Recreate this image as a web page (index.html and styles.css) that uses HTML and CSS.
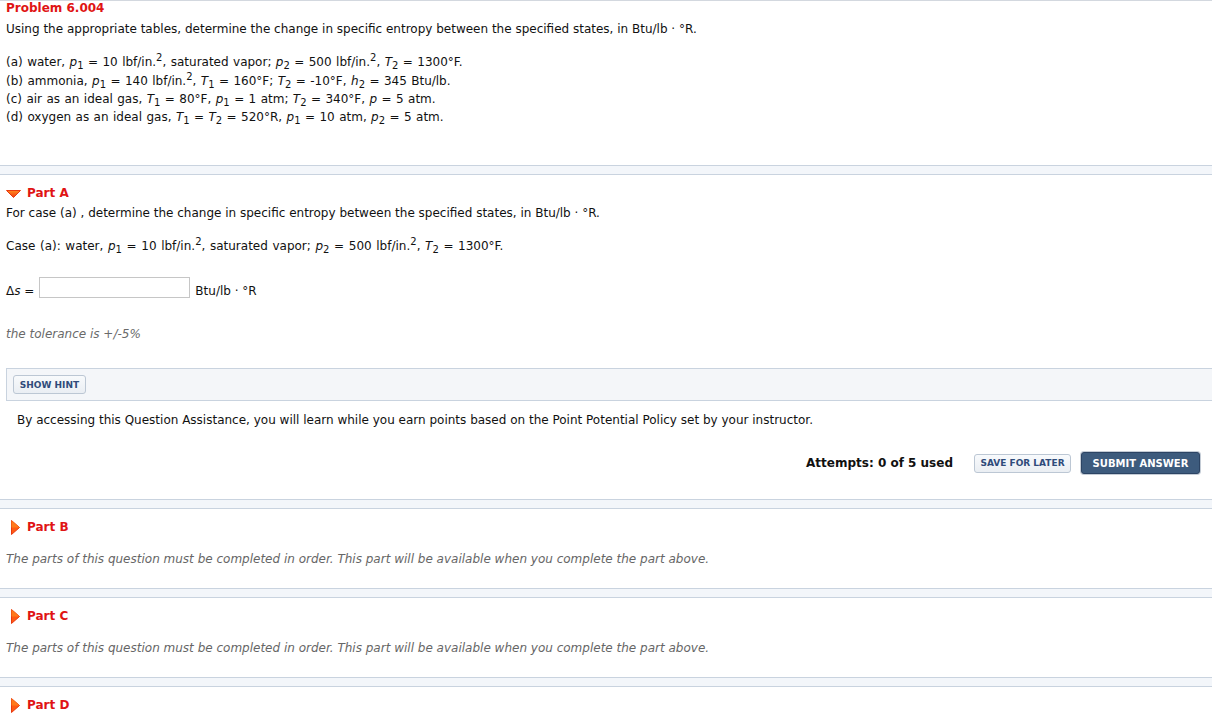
FILE: index.html
```html
<!DOCTYPE html>
<html lang="en">
<head>
<meta charset="utf-8">
<title>Problem 6.004</title>
<link rel="stylesheet" href="styles.css">
</head>
<body>
<div class="page">
  <div class="problem">
    <h1 class="title">Problem 6.004</h1>
    <p class="intro">Using the appropriate tables, determine the change in specific entropy between the specified states, in Btu/lb · °R.</p>
    <div class="cases">
      <div class="case case-a">(a) water, <i>p</i><sub>1</sub> = 10 lbf/in.<sup>2</sup>, saturated vapor; <i>p</i><sub>2</sub> = 500 lbf/in.<sup>2</sup>, <i>T</i><sub>2</sub> = 1300°F.</div>
      <div class="case">(b) ammonia, <i>p</i><sub>1</sub> = 140 lbf/in.<sup>2</sup>, <i>T</i><sub>1</sub> = 160°F; <i>T</i><sub>2</sub> = -10°F, <i>h</i><sub>2</sub> = 345 Btu/lb.</div>
      <div class="case">(c) air as an ideal gas, <i>T</i><sub>1</sub> = 80°F, <i>p</i><sub>1</sub> = 1 atm; <i>T</i><sub>2</sub> = 340°F, <i>p</i> = 5 atm.</div>
      <div class="case">(d) oxygen as an ideal gas, <i>T</i><sub>1</sub> = <i>T</i><sub>2</sub> = 520°R, <i>p</i><sub>1</sub> = 10 atm, <i>p</i><sub>2</sub> = 5 atm.</div>
    </div>
  </div>

  <div class="band band-a"></div>

  <section class="part part-open">
    <div class="part-head">
      <svg class="tri-down" width="15" height="8" viewBox="0 0 15 8" aria-hidden="true">
        <defs>
          <linearGradient id="gd" x1="0" y1="0" x2="0" y2="1">
            <stop offset="0" stop-color="#ff8a1e"/>
            <stop offset="1" stop-color="#f03a10"/>
          </linearGradient>
        </defs>
        <polygon points="0.5,0.5 14.5,0.5 7.5,7.5" fill="url(#gd)" stroke="#e8380f" stroke-width="1" stroke-linejoin="round"/>
      </svg>
      <span class="part-name">Part A</span>
    </div>
    <p class="prompt">For case (a) , determine the change in specific entropy between the specified states, in Btu/lb · °R.</p>
    <p class="case-line">Case (a): water, <i>p</i><sub>1</sub> = 10 lbf/in.<sup>2</sup>, saturated vapor; <i>p</i><sub>2</sub> = 500 lbf/in.<sup>2</sup>, <i>T</i><sub>2</sub> = 1300°F.</p>
    <div class="answer-row">
      <span class="answer-label">Δ<i>s</i> =</span>
      <input class="answer-input" type="text" aria-label="answer">
      <span class="answer-unit">Btu/lb · °R</span>
    </div>
    <p class="tolerance">the tolerance is +/-5%</p>
    <div class="hint-box">
      <button class="btn btn-light btn-hint" type="button">SHOW HINT</button>
    </div>
    <p class="assist">By accessing this Question Assistance, you will learn while you earn points based on the Point Potential Policy set by your instructor.</p>
    <div class="submit-row">
      <span class="attempts">Attempts: 0 of 5 used</span>
      <button class="btn btn-light btn-save" type="button">SAVE FOR LATER</button>
      <button class="btn btn-primary" type="button">SUBMIT ANSWER</button>
    </div>
  </section>

  <div class="band band-b"></div>
  <section class="part part-closed">
    <div class="part-head">
      <svg class="tri-right" width="9" height="15" viewBox="0 0 9 15" aria-hidden="true">
        <polygon points="0.5,0.5 8.5,7.5 0.5,14.5" fill="#ff5a14" stroke="#e8380f" stroke-width="1" stroke-linejoin="round"/>
        <polygon points="0.5,0.5 8.5,7.5 0.5,7.5" fill="#ff7a1c"/>
      </svg>
      <span class="part-name">Part B</span>
    </div>
    <p class="locked">The parts of this question must be completed in order. This part will be available when you complete the part above.</p>
  </section>

  <div class="band"></div>
  <section class="part part-closed">
    <div class="part-head">
      <svg class="tri-right" width="9" height="15" viewBox="0 0 9 15" aria-hidden="true">
        <polygon points="0.5,0.5 8.5,7.5 0.5,14.5" fill="#ff5a14" stroke="#e8380f" stroke-width="1" stroke-linejoin="round"/>
        <polygon points="0.5,0.5 8.5,7.5 0.5,7.5" fill="#ff7a1c"/>
      </svg>
      <span class="part-name">Part C</span>
    </div>
    <p class="locked">The parts of this question must be completed in order. This part will be available when you complete the part above.</p>
  </section>

  <div class="band"></div>
  <section class="part part-closed">
    <div class="part-head">
      <svg class="tri-right" width="9" height="15" viewBox="0 0 9 15" aria-hidden="true">
        <polygon points="0.5,0.5 8.5,7.5 0.5,14.5" fill="#ff5a14" stroke="#e8380f" stroke-width="1" stroke-linejoin="round"/>
        <polygon points="0.5,0.5 8.5,7.5 0.5,7.5" fill="#ff7a1c"/>
      </svg>
      <span class="part-name">Part D</span>
    </div>
  </section>
</div>
</body>
</html>
```

FILE: styles.css
```css
html, body {
  margin: 0;
  padding: 0;
  background: #ffffff;
}

body {
  font-family: "DejaVu Sans", Verdana, sans-serif;
  font-size: 12px;
  color: #111111;
  overflow-x: hidden;
}

.page {
  border-top: 1px solid #d3d8df;
}

p {
  margin: 0;
}

sub, sup {
  font-size: 10px;
  line-height: 0;
}

sub {
  vertical-align: -3px;
}

sup {
  vertical-align: 5px;
}

.problem {
  padding: 2px 6px 0 6px;
}

.title {
  margin: 0;
  font-size: 12px;
  line-height: 11px;
  font-weight: bold;
  color: #e01414;
}

.intro {
  margin-top: 6px;
  line-height: 18px;
}

.cases {
  margin-top: 15px;
}

.case {
  line-height: 18px;
  word-spacing: 0.6px;
}

.case-a {
  margin-bottom: 1px;
}

.band {
  height: 8px;
  border-top: 1px solid #c9d3df;
  border-bottom: 1px solid #c9d3df;
  background: #f3f6fa;
}

.band-a {
  margin-top: 39px;
}

.band-b {
  margin-top: 25px;
}

.part {
  padding: 0 6px;
}

.part-head {
  display: flex;
  align-items: center;
  gap: 6px;
  height: 18px;
  margin-top: 9px;
}

.part-closed .part-head {
  gap: 7px;
  padding-left: 5px;
}

.part-name {
  font-weight: bold;
  color: #e01414;
  line-height: 18px;
}

.tri-down {
  display: block;
  margin-top: 1px;
}

.tri-right {
  display: block;
}

.prompt {
  margin-top: 2px;
  line-height: 18px;
}

.case-line {
  margin-top: 15px;
  line-height: 18px;
  word-spacing: 0.8px;
}

.answer-row {
  display: flex;
  align-items: flex-start;
  margin-top: 22px;
}

.answer-label,
.answer-unit {
  line-height: 18px;
  margin-top: 5px;
}

.answer-input {
  box-sizing: border-box;
  width: 151px;
  height: 21px;
  margin: 0 5px 0 5px;
  padding: 0 3px;
  border: 1px solid #c6c6c6;
  background: #ffffff;
  font: inherit;
}

.tolerance {
  margin-top: 25px;
  line-height: 18px;
  font-style: italic;
  color: #6a6a6a;
}

.hint-box {
  margin-top: 25px;
  margin-right: -6px;
  padding: 6px 6px 6px 6px;
  border: 1px solid #c9d3df;
  border-right: none;
  background: #f4f6f9;
}

.btn {
  box-sizing: border-box;
  display: inline-flex;
  align-items: center;
  justify-content: center;
  font-family: "DejaVu Sans", Verdana, sans-serif;
  font-weight: bold;
  border-radius: 3px;
  padding: 0;
  cursor: pointer;
}

.btn-light {
  background: linear-gradient(#f8fafc, #eaeef3);
  border: 1px solid #bcc7d4;
  color: #2f4b7a;
  font-size: 9px;
  height: 19px;
}

.btn-hint {
  width: 73px;
  display: flex;
}

.assist {
  margin-top: 10px;
  padding-left: 11px;
  line-height: 18px;
}

.submit-row {
  display: flex;
  justify-content: flex-end;
  align-items: center;
  height: 22px;
  margin-top: 23px;
  padding-right: 6px;
}

.attempts {
  font-weight: bold;
  line-height: 18px;
  margin-right: 21px;
}

.btn-save {
  width: 97px;
  margin-right: 10px;
}

.btn-primary {
  width: 119px;
  height: 22px;
  background: #3d5b7d;
  border: 1px solid #2c4464;
  box-shadow: 0 0 0 1px #c4ccd6;
  color: #ffffff;
  font-size: 10px;
}

.locked {
  margin-top: 14px;
  margin-bottom: 20px;
  line-height: 18px;
  font-style: italic;
  color: #666666;
}
```
